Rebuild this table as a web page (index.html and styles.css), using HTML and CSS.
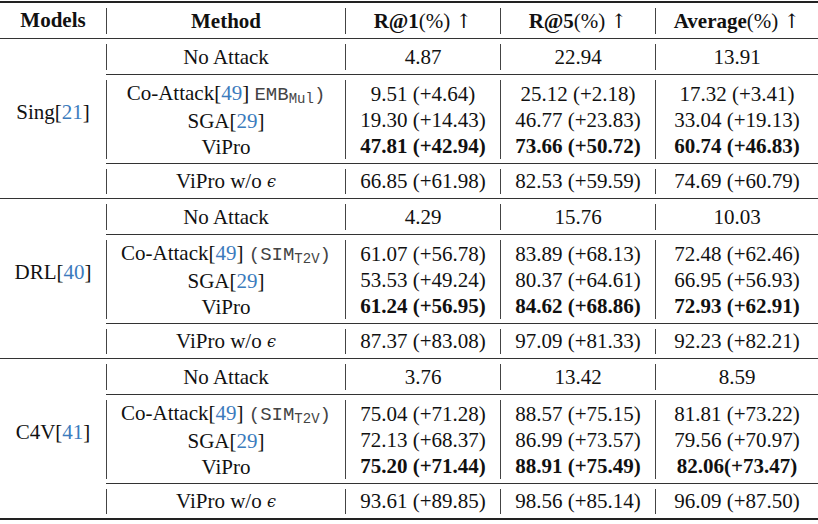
FILE: index.html
```html
<!DOCTYPE html>
<html>
<head>
<meta charset="utf-8">
<link rel="stylesheet" href="styles.css">
</head>
<body>
<div class="table">
  <div class="grid head">
    <div class="model"><b>Models</b></div>
    <div class="c"><div class="in"><b>Method</b></div></div>
    <div class="c"><div class="in"><span><b>R@1</b>(%) <span class="arrow">&#x2191;&#xFE0E;</span></span></div></div>
    <div class="c"><div class="in"><span><b>R@5</b>(%) <span class="arrow">&#x2191;&#xFE0E;</span></span></div></div>
    <div class="c"><div class="in"><span><b>Average</b>(%) <span class="arrow">&#x2191;&#xFE0E;</span></span></div></div>
  </div>

  <div class="grid group">
    <div class="model">Sing[<span class="ref">21</span>]</div>
    <div class="c rule"><div class="in">No Attack</div></div>
    <div class="c rule"><div class="in">4.87</div></div>
    <div class="c rule"><div class="in">22.94</div></div>
    <div class="c rule"><div class="in">13.91</div></div>
    <div class="c rule"><div class="in stack"><span>Co-Attack[<span class="ref">49</span>] <span class="tt">EMB<sub>Mul</sub>)</span></span><span>SGA[<span class="ref">29</span>]</span><span>ViPro</span></div></div>
    <div class="c rule"><div class="in stack"><span>9.51 (+4.64)</span><span>19.30 (+14.43)</span><b>47.81 (+42.94)</b></div></div>
    <div class="c rule"><div class="in stack"><span>25.12 (+2.18)</span><span>46.77 (+23.83)</span><b>73.66 (+50.72)</b></div></div>
    <div class="c rule"><div class="in stack"><span>17.32 (+3.41)</span><span>33.04 (+19.13)</span><b>60.74 (+46.83)</b></div></div>
    <div class="c"><div class="in">ViPro w/o&nbsp;<i class="eps">&#x03F5;</i></div></div>
    <div class="c"><div class="in">66.85 (+61.98)</div></div>
    <div class="c"><div class="in">82.53 (+59.59)</div></div>
    <div class="c"><div class="in">74.69 (+60.79)</div></div>
  </div>

  <div class="grid group">
    <div class="model">DRL[<span class="ref">40</span>]</div>
    <div class="c rule"><div class="in">No Attack</div></div>
    <div class="c rule"><div class="in">4.29</div></div>
    <div class="c rule"><div class="in">15.76</div></div>
    <div class="c rule"><div class="in">10.03</div></div>
    <div class="c rule"><div class="in stack"><span>Co-Attack[<span class="ref">49</span>] <span class="tt">(SIM<sub>T2V</sub>)</span></span><span>SGA[<span class="ref">29</span>]</span><span>ViPro</span></div></div>
    <div class="c rule"><div class="in stack"><span>61.07 (+56.78)</span><span>53.53 (+49.24)</span><b>61.24 (+56.95)</b></div></div>
    <div class="c rule"><div class="in stack"><span>83.89 (+68.13)</span><span>80.37 (+64.61)</span><b>84.62 (+68.86)</b></div></div>
    <div class="c rule"><div class="in stack"><span>72.48 (+62.46)</span><span>66.95 (+56.93)</span><b>72.93 (+62.91)</b></div></div>
    <div class="c"><div class="in">ViPro w/o&nbsp;<i class="eps">&#x03F5;</i></div></div>
    <div class="c"><div class="in">87.37 (+83.08)</div></div>
    <div class="c"><div class="in">97.09 (+81.33)</div></div>
    <div class="c"><div class="in">92.23 (+82.21)</div></div>
  </div>

  <div class="grid group last">
    <div class="model">C4V[<span class="ref">41</span>]</div>
    <div class="c rule"><div class="in">No Attack</div></div>
    <div class="c rule"><div class="in">3.76</div></div>
    <div class="c rule"><div class="in">13.42</div></div>
    <div class="c rule"><div class="in">8.59</div></div>
    <div class="c rule"><div class="in stack"><span>Co-Attack[<span class="ref">49</span>] <span class="tt">(SIM<sub>T2V</sub>)</span></span><span>SGA[<span class="ref">29</span>]</span><span>ViPro</span></div></div>
    <div class="c rule"><div class="in stack"><span>75.04 (+71.28)</span><span>72.13 (+68.37)</span><b>75.20 (+71.44)</b></div></div>
    <div class="c rule"><div class="in stack"><span>88.57 (+75.15)</span><span>86.99 (+73.57)</span><b>88.91 (+75.49)</b></div></div>
    <div class="c rule"><div class="in stack"><span>81.81 (+73.22)</span><span>79.56 (+70.97)</span><b>82.06(+73.47)</b></div></div>
    <div class="c"><div class="in">ViPro w/o&nbsp;<i class="eps">&#x03F5;</i></div></div>
    <div class="c"><div class="in">93.61 (+89.85)</div></div>
    <div class="c"><div class="in">98.56 (+85.14)</div></div>
    <div class="c"><div class="in">96.09 (+87.50)</div></div>
  </div>
</div>
</body>
</html>
```

FILE: styles.css
```css
* { box-sizing: border-box; }
html, body { margin: 0; padding: 0; background: #fff; }
body {
  font-family: "Liberation Serif", "Times New Roman", serif;
  font-size: 21px;
  color: #111;
  width: 818px;
}
.table { padding-top: 1px; }
.grid {
  display: grid;
  grid-template-columns: 106px 239px 155px 155px 163px;
}
.head {
  height: 38px;
  border-top: 2px solid #222;
  border-bottom: 1px solid #333;
  grid-template-rows: 35px;
}
.group {
  height: 160px;
  grid-template-rows: 36px 89px 34px;
  border-bottom: 1px solid #333;
}
.group.last {
  height: 161px;
  border-bottom: 2px solid #222;
}
.model {
  grid-column: 1;
  display: flex;
  align-items: center;
  justify-content: center;
  white-space: nowrap;
}
.group .model {
  grid-row: 1 / 4;
  padding-bottom: 12px;
}
.c {
  display: flex;
  padding: 5px 0 4px;
  min-width: 0;
}
.c.rule { border-bottom: 1px solid #333; }
.in {
  flex: 1;
  border-left: 1px solid #444;
  display: flex;
  align-items: center;
  justify-content: center;
  white-space: nowrap;
}
.stack {
  flex-direction: column;
  line-height: 26px;
}
.ref { color: #3b7bbd; }
.arrow {
  font-family: "DejaVu Serif", serif;
  font-weight: normal;
  font-size: 20px;
  color: #111;
}
.tt {
  font-family: "Liberation Mono", "Courier New", monospace;
  font-size: 19px;
  color: #444;
}
.tt sub {
  font-size: 14px;
  line-height: 0;
  vertical-align: -3px;
}
.eps {
  font-family: "DejaVu Serif", serif;
  font-style: italic;
  font-size: 16px;
}
b { font-weight: bold; }
```
